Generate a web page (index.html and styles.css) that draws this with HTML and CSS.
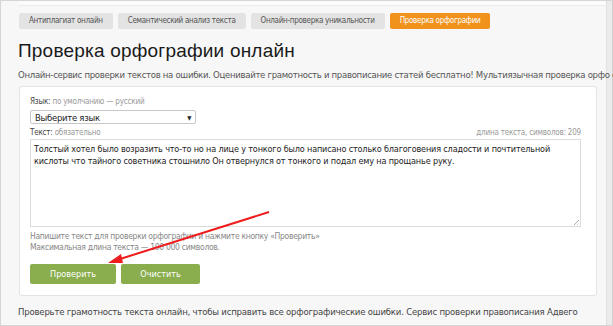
FILE: index.html
```html
<!DOCTYPE html>
<html lang="ru">
<head>
  <meta charset="UTF-8">
  <title>Проверка орфографии онлайн</title>
  <link rel="stylesheet" href="styles.css">
</head>
<body>
  <div class="frame">
    <div class="main">
      <div class="topline"></div>

      <div class="tabs">
        <a class="tab">Антиплагиат онлайн</a>
        <a class="tab">Семантический анализ текста</a>
        <a class="tab">Онлайн-проверка уникальности</a>
        <a class="tab active">Проверка орфографии</a>
      </div>

      <h1>Проверка орфографии онлайн</h1>
      <p class="lead">Онлайн-сервис проверки текстов на ошибки. Оценивайте грамотность и правописание статей бесплатно! Мультиязычная проверка орфо онлайн.</p>

      <div class="card">
        <div class="label">Язык: <span class="hint">по умолчанию — русский</span></div>
        <div class="select">
          <span>Выберите язык</span>
          <span class="caret">▼</span>
        </div>

        <div class="label row">
          <span>Текст: <span class="hint">обязательно</span></span>
          <span class="hint">длина текста, символов: 209</span>
        </div>
        <div class="textarea">Толстый хотел было возразить что-то но на лице у тонкого было написано столько благоговения сладости и почтительной кислоты что тайного советника стошнило Он отвернулся от тонкого и подал ему на прощанье руку.<span class="grip"></span></div>

        <div class="note">Напишите текст для проверки орфографии и нажмите кнопку «Проверить»<br>Максимальная длина текста — 100 000 символов.</div>

        <div class="buttons">
          <button class="btn">Проверить</button>
          <button class="btn">Очистить</button>
        </div>
      </div>

      <p class="bottom">Проверьте грамотность текста онлайн, чтобы исправить все орфографические ошибки. Сервис проверки правописания Адвего</p>

      <svg class="arrow" width="613" height="326" viewBox="0 0 613 326">
        <line x1="269" y1="212" x2="120" y2="259" stroke="#ee1c1c" stroke-width="2"/>
        <polygon points="108,263 121,254 123,263" fill="#ee1c1c"/>
      </svg>
    </div>
    <div class="side"></div>
  </div>
</body>
</html>
```

FILE: styles.css
```css
body {
  margin: 0;
  font-family: "DejaVu Sans Condensed", "DejaVu Sans", sans-serif;
  color: #444;
}
.frame {
  display: flex;
  width: 613px;
  height: 326px;
  box-sizing: border-box;
  border: 1px solid #d6d6d6;
  border-right: none;
  background: #f7f7f7;
  overflow: hidden;
}
.main {
  position: relative;
  flex: 1;
  min-width: 0;
  padding: 0 9px 0 17px;
}
.side {
  width: 5px;
  background: #ebebeb;
  border-left: 1px solid #e0e0e0;
  border-right: 1px solid #d0d0d0;
}
.topline {
  height: 4px;
  margin-right: -9px;
  background: #fbfbfb;
  border-bottom: 1px solid #ececec;
}
.tabs {
  display: flex;
  gap: 5px;
  margin-top: 7px;
  margin-left: 1px;
}
.tab {
  display: block;
  height: 16px;
  line-height: 16px;
  padding: 0 10px;
  background: #e3e3e3;
  border-radius: 2px;
  font-size: 8px;
  letter-spacing: -0.3px;
  color: #555;
}
.tab.active {
  background: #f0921c;
  color: #fff;
}
h1 {
  margin: 10px 0 0;
  font-family: "Liberation Sans", Arial, sans-serif;
  font-size: 19px;
  font-weight: normal;
  line-height: 24px;
  color: #1a1a1a;
  letter-spacing: 0.2px;
}
.lead {
  margin: 6px 0 0;
  font-size: 9.5px;
  line-height: 12px;
  letter-spacing: -0.3px;
  white-space: nowrap;
  color: #555;
}
.card {
  margin: 5px 0 0 1px;
  padding: 9px 15px 11px 10px;
  background: #fff;
  border: 1px solid #e3e3e3;
  border-radius: 3px;
}
.label {
  font-size: 8px;
  letter-spacing: -0.2px;
  color: #444;
  line-height: 12px;
}
.hint {
  color: #999;
}
.row {
  display: flex;
  justify-content: space-between;
  margin-top: 3px;
}
.select {
  display: flex;
  justify-content: space-between;
  align-items: center;
  width: 156px;
  height: 12px;
  margin-top: 2px;
  padding: 0 4px;
  border: 1px solid #c8c8c8;
  border-radius: 2px;
  font-size: 9.5px;
  letter-spacing: -0.3px;
  color: #222;
}
.caret {
  font-size: 6px;
}
.textarea {
  position: relative;
  height: 80px;
  padding: 3px;
  border: 1px solid #dcdcdc;
  font-size: 9px;
  line-height: 12px;
  letter-spacing: -0.15px;
  color: #222;
}
.grip {
  position: absolute;
  right: 1px;
  bottom: 1px;
  width: 5px;
  height: 5px;
  background: linear-gradient(135deg, transparent 45%, #aaa 50%, transparent 60%, transparent 70%, #aaa 75%, transparent 85%);
}
.note {
  margin-top: 4px;
  font-size: 8.5px;
  line-height: 11px;
  letter-spacing: -0.3px;
  color: #888;
}
.buttons {
  display: flex;
  gap: 5px;
  margin-top: 11px;
}
.btn {
  width: 86px;
  height: 20px;
  border: none;
  border-radius: 2px;
  background: #8aae4d;
  color: #fff;
  font-family: inherit;
  font-size: 9px;
}
.btn + .btn {
  width: 79px;
}
.bottom {
  margin: 10px 0 0;
  font-size: 9.5px;
  line-height: 12px;
  letter-spacing: -0.2px;
  color: #444;
  white-space: nowrap;
}
.arrow {
  position: absolute;
  left: -1px;
  top: -1px;
  pointer-events: none;
}
```
